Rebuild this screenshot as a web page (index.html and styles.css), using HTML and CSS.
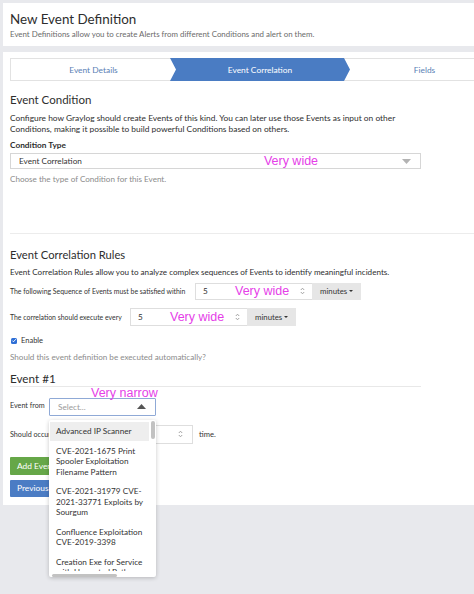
FILE: index.html
```html
<!DOCTYPE html>
<html>
<head>
<meta charset="utf-8">
<link rel="stylesheet" href="styles.css">
</head>
<body>
<div class="page">
  <div class="panel top-panel">
    <h1 class="title">New Event Definition</h1>
    <p class="subtitle">Event Definitions allow you to create Alerts from different Conditions and alert on them.</p>
  </div>

  <div class="panel main-panel">
    <div class="steps">
      <div class="step">Event Details</div>
      <div class="step active">Event Correlation</div>
      <div class="step">Fields</div>
    </div>

    <div class="content">
      <h2 class="section-title first">Event Condition</h2>
      <p class="desc desc-first">Configure how Graylog should create Events of this kind. You can later use those Events as input on other Conditions, making it possible to build powerful Conditions based on others.</p>
      <div class="field-label">Condition Type</div>
      <div class="select wide">
        <span class="select-value">Event Correlation</span>
        <span class="note note-wide">Very wide</span>
        <svg class="caret-down" width="9" height="5" viewBox="0 0 9 5"><path d="M0 0h9L4.5 5z" fill="#b3b3b3"/></svg>
      </div>
      <p class="help first-help">Choose the type of Condition for this Event.</p>
    </div>

    <hr class="divider">

    <div class="content">
      <h2 class="section-title">Event Correlation Rules</h2>
      <p class="desc">Event Correlation Rules allow you to analyze complex sequences of Events to identify meaningful incidents.</p>

      <div class="inline-row row1">
        <label class="row-label label1">The following Sequence of Events must be satisfied within</label>
        <div class="num-input">
          <span class="num">5</span>
          <span class="note note-in">Very wide</span>
          <svg class="spin" width="5" height="8" viewBox="0 0 5 8"><path d="M0.8 3L2.5 1.2 4.2 3M0.8 5L2.5 6.8 4.2 5" fill="none" stroke="#9a9a9a" stroke-width="0.9"/></svg>
        </div>
        <div class="addon">minutes <span class="mini-caret"></span></div>
      </div>

      <div class="inline-row row2">
        <label class="row-label label2">The correlation should execute every</label>
        <div class="num-input">
          <span class="num">5</span>
          <span class="note note-in">Very wide</span>
          <svg class="spin" width="5" height="8" viewBox="0 0 5 8"><path d="M0.8 3L2.5 1.2 4.2 3M0.8 5L2.5 6.8 4.2 5" fill="none" stroke="#9a9a9a" stroke-width="0.9"/></svg>
        </div>
        <div class="addon">minutes <span class="mini-caret"></span></div>
      </div>

      <div class="check-row">
        <span class="checkbox"><svg width="7" height="7" viewBox="0 0 7 7"><path d="M1.5 3.6L2.9 5 5.6 2" fill="none" stroke="#fff" stroke-width="1.1"/></svg></span>
        <span class="check-label">Enable</span>
      </div>
      <p class="help">Should this event definition be executed automatically?</p>

      <div class="event-block">
        <h2 class="event-title">Event #1</h2>
        <span class="note note-narrow">Very narrow</span>

        <div class="ev-row from-row">
          <label class="ev-label">Event from</label>
          <div class="select narrow">
            <span class="placeholder">Select...</span>
            <svg class="caret-up" width="9" height="5" viewBox="0 0 9 5"><path d="M0 5h9L4.5 0z" fill="#555"/></svg>
          </div>
        </div>

        <div class="ev-row occur-row">
          <label class="ev-label">Should occur</label>
          <div class="occur-input">
            <svg class="spin" width="5" height="8" viewBox="0 0 5 8"><path d="M0.8 3L2.5 1.2 4.2 3M0.8 5L2.5 6.8 4.2 5" fill="none" stroke="#9a9a9a" stroke-width="0.9"/></svg>
          </div>
          <span class="time">time.</span>
        </div>

        <div class="buttons">
          <button class="btn btn-green">Add Event</button>
          <button class="btn btn-blue">Previous</button>
        </div>

        <div class="menu">
          <div class="menu-list">
            <div class="menu-item hover">Advanced IP Scanner</div>
            <div class="menu-item">CVE-2021-1675 Print Spooler Exploitation Filename Pattern</div>
            <div class="menu-item">CVE-2021-31979 CVE-2021-33771 Exploits by Sourgum</div>
            <div class="menu-item">Confluence Exploitation CVE-2019-3398</div>
            <div class="menu-item">Creation Exe for Service with Unquoted Path</div>
          </div>
          <span class="vthumb"></span>
          <span class="hthumb"></span>
        </div>
      </div>
    </div>
  </div>
</div>
</body>
</html>
```

FILE: styles.css
```css
html, body {
  margin: 0;
  padding: 0;
  overflow: hidden;
}
body {
  background: #e8e9ed;
  font-family: "Lato", "Open Sans", sans-serif;
  color: #333;
  width: 474px;
  height: 594px;
}
.page {
  padding: 3px 0 0 3px;
  width: 560px;
}
.panel {
  background: #fff;
}
.top-panel {
  height: 43px;
  padding: 0 0 0 7px;
  box-sizing: border-box;
  display: flex;
  flex-direction: column;
}
.title {
  margin: 8px 0 0 0;
  font-weight: 400;
  font-size: 13.4px;
  line-height: 16px;
  color: #2e2e2e;
}
.subtitle {
  margin: 1.5px 0 0 0;
  font-size: 7.9px;
  line-height: 10px;
  color: #6b6b6b;
}
.main-panel {
  margin-top: 6px;
  padding: 6px 0 8px 7px;
}
.steps {
  display: flex;
  width: 495px;
  height: 23px;
  border: 1px solid #e2e2e2;
  box-sizing: border-box;
}
.step {
  flex: 0 0 165px;
  display: flex;
  align-items: center;
  justify-content: center;
  font-size: 8.4px;
  color: #5a7fb5;
}
.step.active {
  flex: 0 0 180px;
  margin: -1px -8px -1px -6px;
  background: #4a7cc3;
  color: #fff;
  clip-path: polygon(0 0, calc(100% - 6px) 0, 100% 50%, calc(100% - 6px) 100%, 0 100%, 6px 50%);
  position: relative;
  z-index: 1;
}
.content {
  width: 420px;
}
.section-title {
  margin: 12px 0 0 0;
  font-weight: 400;
  font-size: 11.5px;
  line-height: 14px;
  color: #2e2e2e;
}
.desc {
  margin: 5.5px 0 0 0;
  font-size: 8.1px;
  line-height: 11px;
  color: #2e2e2e;
}
.desc-first {
  font-size: 8.4px;
  max-width: 395px;
}
.field-label {
  margin-top: 5px;
  font-size: 8.3px;
  line-height: 11px;
  font-weight: 700;
  color: #2e2e2e;
}
.select {
  display: flex;
  align-items: center;
  border: 1px solid #d6d6d6;
  box-sizing: border-box;
  background: #fff;
}
.select.wide {
  margin-top: 2.5px;
  width: 411px;
  height: 16px;
  padding: 0 9px 0 8px;
}
.select-value {
  font-size: 8.2px;
  color: #333;
  flex: 0 0 auto;
}
.note {
  font-family: "Liberation Sans", Arial, sans-serif;
  color: #e53ee8;
  font-size: 12.5px;
  line-height: 14px;
}
.note-wide {
  margin-left: 182px;
  flex: 1 1 auto;
}
.caret-down {
  flex: 0 0 auto;
}
.help {
  margin: 4.5px 0 0 0;
  font-size: 8.1px;
  line-height: 11px;
  color: #8b8b8b;
}
.divider {
  margin: 48px 0 0 0;
  border: 0;
  border-top: 1px solid #ececec;
  width: 480px;
  height: 0;
}
.divider + .content .section-title {
  margin-top: 14px;
  font-size: 11.2px;
}
.inline-row {
  display: flex;
  align-items: center;
}
.row1 {
  margin-top: 4.5px;
  height: 17px;
}
.row2 {
  margin-top: 8px;
  height: 18px;
}
.row-label {
  font-size: 6.9px;
  color: #333;
  white-space: nowrap;
}
.label1 {
  flex: 0 0 185px;
}
.label2 {
  flex: 0 0 120px;
}
.num-input {
  display: flex;
  align-items: center;
  width: 117px;
  height: 100%;
  box-sizing: border-box;
  border: 1px solid #dedede;
  border-right: 0;
  padding: 0 0 0 7px;
}
.num {
  font-size: 8.2px;
  color: #333;
  width: 32px;
}
.note-in {
  width: 65px;
}
.spin {
  flex: 0 0 auto;
}
.addon {
  display: flex;
  align-items: center;
  width: 49px;
  height: 100%;
  background: #e6e6e6;
  font-size: 7.8px;
  color: #333;
  padding-left: 8px;
  box-sizing: border-box;
}
.mini-caret {
  display: inline-block;
  margin-left: 2px;
  width: 0;
  height: 0;
  border-left: 2px solid transparent;
  border-right: 2px solid transparent;
  border-top: 2px solid #333;
}
.check-row {
  display: flex;
  align-items: center;
  margin-top: 9.5px;
  height: 11px;
  padding-left: 1px;
}
.checkbox {
  display: flex;
  align-items: center;
  justify-content: center;
  width: 6px;
  height: 6px;
  border-radius: 1.5px;
  background: #2f6fd6;
}
.check-label {
  margin-left: 4px;
  font-size: 7.5px;
  color: #333;
}
.check-row + .help {
  margin-top: 6px;
}
.event-block {
  position: relative;
  width: 411px;
}
.event-title {
  margin: 6.5px 0 0 0;
  font-weight: 400;
  font-size: 11.7px;
  line-height: 16px;
  color: #2e2e2e;
  border-bottom: 1px solid #e8e8e8;
}
.note-narrow {
  position: absolute;
  left: 81px;
  top: 16px;
}
.ev-row {
  display: flex;
  align-items: center;
}
.from-row {
  margin-top: 11px;
  height: 18px;
}
.ev-label {
  font-size: 7.2px;
  color: #333;
  flex: 0 0 39px;
  align-self: flex-start;
  padding-top: 3px;
}
.select.narrow {
  width: 107px;
  height: 18px;
  border-color: #8fa9d6;
  border-radius: 1px;
  padding: 0 9px 0 8px;
  justify-content: space-between;
}
.placeholder {
  font-size: 8.2px;
  color: #9a9a9a;
}
.occur-row {
  margin-top: 9px;
  height: 19px;
}
.occur-row .ev-label {
  flex: 0 0 auto;
  align-self: center;
  padding-top: 0;
  white-space: nowrap;
}
.occur-input {
  margin-left: 6px;
  flex: 0 0 136px;
  height: 100%;
  box-sizing: border-box;
  border: 1px solid #dedede;
  display: flex;
  align-items: center;
  justify-content: flex-end;
  padding-right: 9px;
}
.time {
  margin-left: 6px;
  font-size: 7.6px;
  color: #333;
}
.buttons {
  display: flex;
  flex-direction: column;
  align-items: flex-start;
  margin-top: 13px;
}
.btn {
  border: 0;
  border-radius: 1px;
  font-family: "Lato", sans-serif;
  font-size: 8.4px;
  color: #fff;
  padding: 0 8px 0 7px;
  text-align: left;
}
.btn-green {
  height: 18px;
  width: 60px;
  background: #66a748;
}
.btn-blue {
  margin-top: 5px;
  height: 17px;
  width: 60px;
  background: #4b7cc4;
}
.menu {
  position: absolute;
  left: 39px;
  top: 50.5px;
  width: 107px;
  height: 157px;
  background: #fff;
  box-shadow: 0 1px 4px rgba(0,0,0,0.22);
  border-radius: 2px;
}
.menu-list {
  height: 151px;
  overflow: hidden;
  padding-top: 1.5px;
  box-sizing: border-box;
  width: 99px;
  margin-left: 1px;
}
.menu-item {
  padding: 4.5px 3px 4.5px 6px;
  font-size: 8.2px;
  line-height: 10.5px;
  color: #333;
}
.menu-item.hover {
  background: #eeeeee;
}
.vthumb {
  position: absolute;
  left: 102px;
  top: 1px;
  width: 4px;
  height: 18px;
  border-radius: 2px;
  background: #c2c2c2;
}
.hthumb {
  position: absolute;
  left: 3px;
  top: 153.5px;
  width: 65px;
  height: 3px;
  border-radius: 2px;
  background: #c2c2c2;
}
```
